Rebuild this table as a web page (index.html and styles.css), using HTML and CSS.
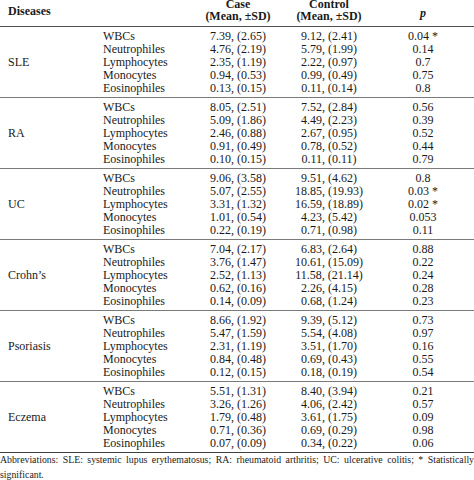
FILE: index.html
```html
<!DOCTYPE html>
<html>
<head>
<meta charset="utf-8">
<link rel="stylesheet" href="styles.css">
</head>
<body>
<div class="table">
  <div class="head">
    <div class="hcell hdis">Diseases</div>
    <div class="hcell"></div>
    <div class="hcell hc">Case<br>(Mean, ±SD)</div>
    <div class="hcell hc">Control<br>(Mean, ±SD)</div>
    <div class="hcell hp">p</div>
  </div>

  <div class="group">
    <div class="dis">SLE</div>
    <div class="an">WBCs</div><div class="v">7.39, (2.65)</div><div class="v">9.12, (2.41)</div><div class="v">0.04 *</div>
    <div class="an">Neutrophiles</div><div class="v">4.76, (2.19)</div><div class="v">5.79, (1.99)</div><div class="v">0.14</div>
    <div class="an">Lymphocytes</div><div class="v">2.35, (1.19)</div><div class="v">2.22, (0.97)</div><div class="v">0.7</div>
    <div class="an">Monocytes</div><div class="v">0.94, (0.53)</div><div class="v">0.99, (0.49)</div><div class="v">0.75</div>
    <div class="an">Eosinophiles</div><div class="v">0.13, (0.15)</div><div class="v">0.11, (0.14)</div><div class="v">0.8</div>
  </div>

  <div class="group">
    <div class="dis">RA</div>
    <div class="an">WBCs</div><div class="v">8.05, (2.51)</div><div class="v">7.52, (2.84)</div><div class="v">0.56</div>
    <div class="an">Neutrophiles</div><div class="v">5.09, (1.86)</div><div class="v">4.49, (2.23)</div><div class="v">0.39</div>
    <div class="an">Lymphocytes</div><div class="v">2.46, (0.88)</div><div class="v">2.67, (0.95)</div><div class="v">0.52</div>
    <div class="an">Monocytes</div><div class="v">0.91, (0.49)</div><div class="v">0.78, (0.52)</div><div class="v">0.44</div>
    <div class="an">Eosinophiles</div><div class="v">0.10, (0.15)</div><div class="v">0.11, (0.11)</div><div class="v">0.79</div>
  </div>

  <div class="group">
    <div class="dis">UC</div>
    <div class="an">WBCs</div><div class="v">9.06, (3.58)</div><div class="v">9.51, (4.62)</div><div class="v">0.8</div>
    <div class="an">Neutrophiles</div><div class="v">5.07, (2.55)</div><div class="v">18.85, (19.93)</div><div class="v">0.03 *</div>
    <div class="an">Lymphocytes</div><div class="v">3.31, (1.32)</div><div class="v">16.59, (18.89)</div><div class="v">0.02 *</div>
    <div class="an">Monocytes</div><div class="v">1.01, (0.54)</div><div class="v">4.23, (5.42)</div><div class="v">0.053</div>
    <div class="an">Eosinophiles</div><div class="v">0.22, (0.19)</div><div class="v">0.71, (0.98)</div><div class="v">0.11</div>
  </div>

  <div class="group">
    <div class="dis">Crohn’s</div>
    <div class="an">WBCs</div><div class="v">7.04, (2.17)</div><div class="v">6.83, (2.64)</div><div class="v">0.88</div>
    <div class="an">Neutrophiles</div><div class="v">3.76, (1.47)</div><div class="v">10.61, (15.09)</div><div class="v">0.22</div>
    <div class="an">Lymphocytes</div><div class="v">2.52, (1.13)</div><div class="v">11.58, (21.14)</div><div class="v">0.24</div>
    <div class="an">Monocytes</div><div class="v">0.62, (0.16)</div><div class="v">2.26, (4.15)</div><div class="v">0.28</div>
    <div class="an">Eosinophiles</div><div class="v">0.14, (0.09)</div><div class="v">0.68, (1.24)</div><div class="v">0.23</div>
  </div>

  <div class="group">
    <div class="dis">Psoriasis</div>
    <div class="an">WBCs</div><div class="v">8.66, (1.92)</div><div class="v">9.39, (5.12)</div><div class="v">0.73</div>
    <div class="an">Neutrophiles</div><div class="v">5.47, (1.59)</div><div class="v">5.54, (4.08)</div><div class="v">0.97</div>
    <div class="an">Lymphocytes</div><div class="v">2.31, (1.19)</div><div class="v">3.51, (1.70)</div><div class="v">0.16</div>
    <div class="an">Monocytes</div><div class="v">0.84, (0.48)</div><div class="v">0.69, (0.43)</div><div class="v">0.55</div>
    <div class="an">Eosinophiles</div><div class="v">0.12, (0.15)</div><div class="v">0.18, (0.19)</div><div class="v">0.54</div>
  </div>

  <div class="group last">
    <div class="dis">Eczema</div>
    <div class="an">WBCs</div><div class="v">5.51, (1.31)</div><div class="v">8.40, (3.94)</div><div class="v">0.21</div>
    <div class="an">Neutrophiles</div><div class="v">3.26, (1.26)</div><div class="v">4.06, (2.42)</div><div class="v">0.57</div>
    <div class="an">Lymphocytes</div><div class="v">1.79, (0.48)</div><div class="v">3.61, (1.75)</div><div class="v">0.09</div>
    <div class="an">Monocytes</div><div class="v">0.71, (0.36)</div><div class="v">0.69, (0.29)</div><div class="v">0.98</div>
    <div class="an">Eosinophiles</div><div class="v">0.07, (0.09)</div><div class="v">0.34, (0.22)</div><div class="v">0.06</div>
  </div>
</div>
<p class="note">Abbreviations: SLE: systemic lupus erythematosus; RA: rheumatoid arthritis; UC: ulcerative colitis; * Statistically significant.</p>
</body>
</html>
```

FILE: styles.css
```css
* {
  box-sizing: border-box;
}

body {
  margin: 0;
  background: #ffffff;
  color: #1a1a1a;
  font-family: "Liberation Serif", "Times New Roman", serif;
}

.table {
  margin-top: -2px;
}

.head,
.group {
  display: grid;
  grid-template-columns: 103px 87px 96px 86px 1fr;
}

.head {
  height: 29px;
  font-size: 12px;
  line-height: 12px;
  font-weight: bold;
  border-bottom: 1.5px solid #505050;
}

.hcell {
  display: flex;
  flex-direction: column;
  justify-content: center;
  padding-bottom: 2px;
  white-space: nowrap;
}

.hdis {
  padding-left: 8px;
}

.hc {
  justify-content: flex-start;
  align-items: center;
  text-align: center;
  padding-bottom: 0;
}

.hp {
  align-items: center;
  font-style: italic;
  padding-top: 3px;
}

.group {
  grid-auto-rows: 13px;
  padding: 2.5px 0 2.5px;
  font-size: 12px;
  line-height: 13px;
  border-bottom: 1px solid #7a7a7a;
}

.group.last {
  border-bottom: 1.5px solid #404040;
}

.dis {
  grid-row: 1 / span 5;
  align-self: center;
  padding-left: 8px;
  white-space: nowrap;
}

.an {
  white-space: nowrap;
}

.v {
  text-align: center;
  white-space: nowrap;
}

.note {
  margin: 0;
  font-size: 9.8px;
  line-height: 14.5px;
  text-align: justify;
}
```
